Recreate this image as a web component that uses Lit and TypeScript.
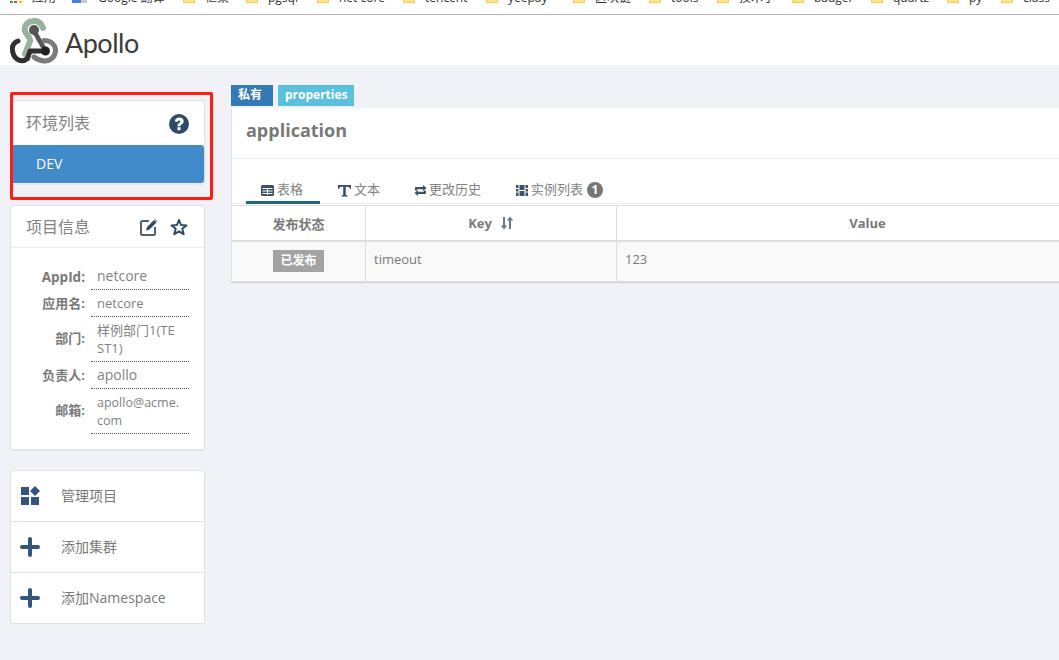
import { LitElement, html, css, svg } from "lit";
import { customElement } from "lit/decorators.js";

const marks: [string, number, string][] = [
  ["apps", 62, "应用"],
  ["blue", 111, "Google 翻译"],
  ["f", 63, "框架"],
  ["f", 71, "pgsql"],
  ["f", 86, "net core"],
  ["f", 83, "tencent"],
  ["f", 87, "yeepay"],
  ["f", 76, "区块链"],
  ["f", 68, "tools"],
  ["f", 75, "技术小"],
  ["f", 79, "badger"],
  ["f", 76, "quartz"],
  ["f", 54, "py"],
  ["f", 70, "class"],
];

const plus = svg`<svg class="act-ico" viewBox="0 0 20 20"><path d="M10 2v16M2 10h16" fill="none" stroke="#34557b" stroke-width="4" stroke-linecap="round"/></svg>`;

@customElement("app-root")
export class AppRoot extends LitElement {
  static styles = css`
    :host { display: block; width: 1059px; height: 660px; overflow: hidden; position: relative; background: #f0f2f7;
      font-family: "Open Sans", "Noto Sans CJK SC", sans-serif; color: #797979; font-size: 13px; }
    .bookmarks { height: 14px; background: #fff; border-bottom: 1px solid #b5b5b5; box-sizing: content-box; display: flex; overflow: hidden; padding-left: 10px; color: #333; font-size: 12px; }
    .mark { flex: none; display: flex; gap: 10px; align-items: flex-end; height: 3px; line-height: 14px; white-space: nowrap; }
    .mark span { position: relative; top: 2px; }
    .folder { flex: none; width: 12px; height: 12px; background: #fde383; border: 1px solid #f2cf62; box-sizing: border-box; }
    .blue { flex: none; width: 15px; height: 12px; background: linear-gradient(90deg, #4a7fe0 60%, #ccc 60%); margin-right: 1px; }
    .apps { flex: none; width: 12px; height: 2px; align-self: flex-end; background: linear-gradient(90deg, #34a853 0 3px, transparent 3px 4.5px, #ea4335 4.5px 7.5px, transparent 7.5px 9px, #fbbc05 9px); margin-right: 0; }
    .top { height: 50px; background: #fff; display: flex; align-items: center; padding-left: 10px; gap: 7px; }
    .logo { width: 48px; height: 46px; flex: none; margin-top: 2px; }
    .brand { font-family: "Lato", sans-serif; font-size: 27px; color: #3c3c3c; letter-spacing: -0.5px; position: relative; top: 2px; }
    .layout { display: grid; grid-template-columns: 195px 900px; column-gap: 26px; padding: 19px 0 0 10px; }
    .side { display: flex; flex-direction: column; }
    .panel { background: #fff; border: 1px solid #dfe1e6; border-radius: 3px; box-shadow: 0 1px 1px rgba(0,0,0,.05); box-sizing: border-box; }
    .env { margin-top: 16px; height: 84px; border-bottom: 0; box-shadow: none; }
    .head { height: 44px; display: flex; align-items: center; justify-content: space-between; padding: 0 15px; font-size: 16px; color: #828282; }
    .env .head { padding-bottom: 2px; box-sizing: border-box; }
    .q { margin-top: 4px; }
    .dev { height: 38px; margin-left: 0; background: #428bca; color: #fff; font-size: 14px; padding-left: 25px; line-height: 38px; border-radius: 3px; box-shadow: 0 1px 2px rgba(0,0,0,.1); }
    .info { margin-top: 21px; height: 245px; }
    .info .head { height: 42px; border-bottom: 1px solid #eaecf0; padding: 0 16px 1px 15px; box-sizing: border-box; }
    .icons { display: flex; gap: 12px; align-items: center; margin-top: 1px; }
    .rows { padding: 15px 15px 0 15px; display: grid; grid-template-columns: 65px 98px; }
    .lab { font-weight: 700; text-align: right; padding: 0 6px 2px 0; align-self: center; font-size: 13px; color: #797979; }
    .lab.big { font-size: 13.5px; padding-bottom: 0; }
    .lab.tall { padding-bottom: 4px; }
    .val { border-bottom: 1px dotted #555; padding: 4px 0 4px 6px; line-height: 18px; font-size: 13px; white-space: nowrap; color: #828282; }
    .val.big { font-size: 14px; }
    .val.small { font-size: 12.5px; padding: 5px 0 3px 6px; }
    .actions { margin-top: 20px; height: 154px; border-radius: 3px 3px 0 0; box-shadow: none; }
    .act { height: 51px; display: flex; align-items: center; padding-left: 9px; gap: 21px; border-bottom: 1px solid #dfe1e6; box-sizing: border-box; color: #797979; font-size: 14px; }
    .act span { margin-bottom: 2px; }
    .act:last-child { border-bottom: 0; height: 50px; }
    .act-ico { width: 20px; height: 20px; flex: none; }
    .main { padding-top: 1px; }
    .tags { display: flex; gap: 5px; height: 23px; }
    .tag { height: 21px; line-height: 19px; padding: 0 7px; color: #fff; font-weight: 700; font-size: 12px; }
    .tag.pri { background: #337ab7; padding-right: 11px; }
    .tag.typ { background: #5bc0de; padding-right: 6px; }
    .card { background: #fff; box-shadow: 0 1px 1px rgba(0,0,0,.12); border-left: 1px solid #e4e6ea; }
    .title { height: 51px; border-bottom: 1px solid #eef0f4; box-sizing: border-box; display: flex; align-items: center; padding: 0 0 6px 14px; font-size: 18px; font-weight: 700; color: #797979; }
    .tabs { height: 45px; display: flex; align-items: flex-end; padding-left: 14px; border-bottom: 1px solid #eceef1; box-sizing: border-box; }
    .tab { height: 24px; display: flex; align-items: flex-start; gap: 3px; padding-left: 15px; box-sizing: border-box; font-size: 13px; color: #828282; line-height: 20px; }
    .tab svg { flex: none; margin-top: 5px; }
    .tab.on { width: 74px; height: 25px; border-bottom: 3px solid #1d6a80; margin-bottom: -1px; }
    .t2 { width: 76px; padding-left: 18px; }
    .t3 { width: 102px; padding-left: 18px; gap: 2px; }
    .t4 { padding-left: 18px; gap: 2px; }
    .badge { width: 16px; height: 16px; border-radius: 50%; background: #777; color: #fff; font-size: 12px; font-weight: 700; line-height: 16px; text-align: center; margin: 3px 0 0 2px; }
    .table { display: grid; grid-template-columns: 134px 251px 502px; margin-top: 1px; border-top: 1px solid #ddd; }
    .table > div { box-sizing: border-box; border-right: 1px solid #ddd; }
    .th { height: 36px; font-weight: 700; display: flex; align-items: center; justify-content: center; gap: 8px; border-bottom: 2px solid #ddd; color: #797979; }
    .td { height: 40px; background: #f9f9f9; display: flex; align-items: center; padding: 0 8px 6px; border-bottom: 1px solid #ddd; color: #797979; }
    .td.c { justify-content: center; padding-bottom: 2px; }
    .pub { background: #a3a3a3; color: #fff; font-weight: 700; font-size: 12px; height: 22px; line-height: 22px; padding: 0 7px; }
    .box { position: absolute; left: 10px; top: 92px; width: 203px; height: 108px; box-sizing: border-box; border: 3px solid #ff1d14; border-radius: 2px; }
  `;

  render() {
    return html`
      <div class="bookmarks">
        ${marks.map(([k, w, t]) => html`<div class="mark" style="width:${w}px"><i class=${k === "f" ? "folder" : k}></i><span>${t}</span></div>`)}
      </div>
      <div class="top">
        <svg class="logo" viewBox="10 17 48 46">
          <path d="M43 27C41 21.500 37 19.500 33 20C27 20.500 24 25 25 30C26 34.500 31 36 30 40L25 53" fill="none" stroke="#97b39f" stroke-width="6" stroke-linecap="round"/>
          <path d="M18 40C12.500 42 11.500 47 13 52C15 59 22 62 27.500 57.500L30 50H45" fill="none" stroke="#2f2f2f" stroke-width="5" stroke-linecap="round" stroke-linejoin="round"/>
          <path d="M34 30L45 49" fill="none" stroke="#555" stroke-width="4.500"/>
          <path d="M44 39.500C51 39.500 56 44 55.500 50C55 57 49 60.500 44 60C40 59.500 37 58.500 34 56" fill="none" stroke="#7b7b7b" stroke-width="5" stroke-linecap="round"/>
          <circle cx="34" cy="29" r="5" fill="#555"/>
          <circle cx="45.500" cy="50" r="4.500" fill="#222"/>
        </svg>
        <span class="brand">Apollo</span>
      </div>
      <div class="layout">
        <div class="side">
          <div class="panel env">
            <div class="head">环境列表
              <svg class="q" width="20" height="20" viewBox="0 0 20 20"><circle cx="10" cy="10" r="10" fill="#2f4a68"/><path d="M5.800 7.200C6.200 4.800 8 3.600 10.300 3.600C12.800 3.600 14.700 5 14.700 7.300C14.700 9 13.600 9.800 12.500 10.500C11.700 11 11.500 11.300 11.500 12.300H8.500C8.500 10.500 9 9.700 10.200 9C11 8.500 11.400 8.200 11.400 7.600C11.400 7 10.900 6.600 10.200 6.600C9.400 6.600 8.900 7.100 8.700 8Z" fill="#fff"/><rect x="8.500" y="13.200" width="3" height="3" fill="#fff"/></svg>
            </div>
            <div class="dev">DEV</div>
          </div>
          <div class="panel info">
            <div class="head">项目信息
              <span class="icons">
                <svg width="18" height="18" viewBox="0 0 18 18"><path d="M9 3H2.500C1.700 3 1 3.700 1 4.500V15.500C1 16.300 1.700 17 2.500 17H13.500C14.300 17 15 16.300 15 15.500V9" fill="none" stroke="#4e6276" stroke-width="2"/><path d="M6 12.500L7 9L14 2L16.500 4.500L9.500 11.500Z" fill="#2f4a68"/><path d="M15 1L17.500 3.500L17 4L14.500 1.500Z" fill="#2f4a68"/></svg>
                <svg width="18" height="18" viewBox="0 0 18 18"><path d="M9 2L11 7L16.500 7.400L12.300 10.800L13.700 16.200L9 13.300L4.300 16.200L5.700 10.800L1.500 7.400L7 7Z" fill="none" stroke="#2f4a68" stroke-width="2" stroke-linejoin="round"/></svg>
              </span>
            </div>
            <div class="rows">
              <div class="lab big">AppId:</div><div class="val big">netcore</div>
              <div class="lab">应用名:</div><div class="val">netcore</div>
              <div class="lab tall">部门:</div><div class="val">样例部门1(TE<br>ST1)</div>
              <div class="lab">负责人:</div><div class="val big">apollo</div>
              <div class="lab tall">邮箱:</div><div class="val small">apollo@acme.<br>com</div>
            </div>
          </div>
          <div class="panel actions">
            <div class="act">
              <svg class="act-ico" viewBox="0 0 20 20" fill="#34557b"><rect x="1" y="1" width="8" height="8"/><rect x="1" y="11" width="8" height="8"/><rect x="11" y="11" width="8" height="8"/><path d="M15 0L20 5L15 10L10 5Z"/></svg>
              <span>管理项目</span>
            </div>
            <div class="act">${plus}<span>添加集群</span></div>
            <div class="act">${plus}<span>添加Namespace</span></div>
          </div>
        </div>
        <div class="main">
          <div class="tags"><span class="tag pri">私有</span><span class="tag typ">properties</span></div>
          <div class="card">
            <div class="title">application</div>
            <div class="tabs">
              <div class="tab on">
                <svg width="13" height="13" viewBox="0 0 13 13"><rect x="0" y="1" width="13" height="11" rx="1.500" fill="#3d5068"/><path d="M1.500 4.500H11.500M1.500 7H11.500M1.500 9.500H11.500M6.500 4V11" stroke="#fff" stroke-width="1"/></svg>
                <span>表格</span>
              </div>
              <div class="tab t2">
                <svg width="13" height="13" viewBox="0 0 13 13" fill="#3d5068"><path d="M0 1H13V5H12C11.800 3.500 11 2.800 9 2.800H7.800V10.500C7.800 11 8.300 11.300 9.500 11.300V12.500H3.500V11.300C4.700 11.300 5.200 11 5.200 10.500V2.800H4C2 2.800 1.200 3.500 1 5H0Z"/></svg>
                <span>文本</span>
              </div>
              <div class="tab t3">
                <svg width="13" height="13" viewBox="0 0 13 13" fill="#3d5068"><path d="M2 3H9V1L12.500 4L9 7V5.200H3V6.500H1V4C1 3.400 1.400 3 2 3Z"/><path d="M11 10H4V12L.500 9L4 6V7.800H10V6.500H12V9C12 9.600 11.600 10 11 10Z"/></svg>
                <span>更改历史</span>
              </div>
              <div class="tab t4">
                <svg width="13" height="13" viewBox="0 0 13 13"><rect x="0" y="1" width="12" height="11" fill="#3d5068"/><path d="M3 1V12M9 1V12M0 4.500H3M0 8H3M9 4.500H12M9 8H12M3 6.500H9" stroke="#fff" stroke-width="1"/></svg>
                <span>实例列表</span>
                <span class="badge">1</span>
              </div>
            </div>
            <div class="table">
              <div class="th">发布状态</div>
              <div class="th">Key
                <svg width="14" height="14" viewBox="0 0 14 14" fill="#6b7785"><path d="M3 1H5V9.500H7.200L4 13.500L.800 9.500H3Z"/><path d="M9 13H11V4.500H13.200L10 .500L6.800 4.500H9Z"/></svg>
              </div>
              <div class="th">Value</div>
              <div class="td c"><span class="pub">已发布</span></div>
              <div class="td">timeout</div>
              <div class="td">123</div>
            </div>
          </div>
        </div>
      </div>
      <div class="box"></div>
    `;
  }
}
